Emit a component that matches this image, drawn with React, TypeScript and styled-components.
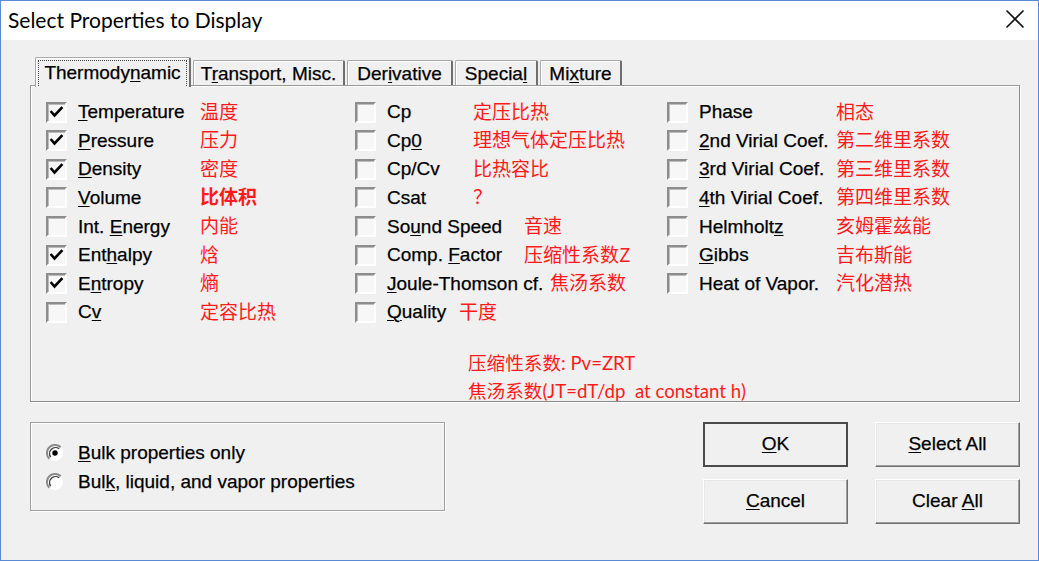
import React from "react";
import styled, {createGlobalStyle} from "styled-components";

const GlobalStyle = createGlobalStyle`
  html, body {
    margin: 0;
    padding: 0;
    background: #ffffff;
  }
  * {
    box-sizing: border-box;
  }
`;

const Window = styled.div`
  width: 1039px;
  height: 561px;
  border: 1px solid #5a8ad4;
  display: flex;
  flex-direction: column;
  background: #f0f0f0;
  font-family: "Liberation Sans", Arial, sans-serif;
  font-size: 19px;
  color: #000;
  -webkit-text-stroke: 0.25px #000;
`;

const TitleBar = styled.div`
  height: 39px;
  flex: none;
  background: #ffffff;
  display: flex;
  align-items: center;
  justify-content: space-between;
  padding: 0 8px 0 7px;
  -webkit-text-stroke: 0;
`;

const Title = styled.span`
  font-family: Lato, "Noto Sans", sans-serif;
  font-size: 21px;
  color: #000;
  padding-bottom: 3px;
`;

const CloseButton = styled.div`
  width: 30px;
  height: 30px;
  display: flex;
  align-items: center;
  justify-content: center;
  margin-bottom: 4px;
`;

const Body = styled.div`
  flex: 1;
  padding: 17px 18px 0 29px;
  display: flex;
  flex-direction: column;
`;

const TabStrip = styled.div`
  display: flex;
  align-items: flex-end;
  height: 30px;
  padding-left: 5px;
  margin-bottom: -2px;
  position: relative;
  z-index: 1;
`;

interface TabProps {
    width: number;
    selected?: boolean;
}

const Tab = styled.div<TabProps>`
  width: ${p => p.width}px;
  height: ${p => p.selected ? 30 : 25}px;
  margin-bottom: ${p => p.selected ? 0 : 2}px;
  margin-right: 2px;
  background: #f0f0f0;
  border-top: 1px solid #a8a8a8;
  border-left: 1px solid #a8a8a8;
  border-right: 2px solid #6e6e6e;
  box-shadow: inset 1px 1px 0 #ffffff;
  border-radius: 2px 2px 0 0;
  display: flex;
  justify-content: center;
  padding-top: ${p => p.selected ? 4 : 2}px;
  position: relative;
  line-height: 21px;
  white-space: nowrap;
`;

const FocusRing = styled.div`
  position: absolute;
  left: 2px;
  right: 2px;
  top: 2px;
  bottom: 1px;
  border: 1px dotted #444;
  border-bottom: none;
`;

const U = styled.span`
  text-decoration: underline;
  text-underline-offset: 2px;
  text-decoration-thickness: 1px;
`;

const Panel = styled.div`
  height: 317px;
  border: 1px solid #999999;
  border-right-color: #8a8a8a;
  border-bottom-color: #8a8a8a;
  box-shadow: inset 1px 1px 0 #ffffff, 1px 1px 0 #ffffff;
  padding: 12px 0 0 15px;
  display: flex;
  flex-direction: column;
`;

const Columns = styled.div`
  display: flex;
`;

const Column = styled.div<{ width?: number }>`
  display: flex;
  flex-direction: column;
  width: ${p => p.width ? `${p.width}px` : "auto"};
`;

const Row = styled.div`
  height: 28.57px;
  display: flex;
  align-items: center;
`;

const Box = styled.div`
  width: 21px;
  height: 21px;
  flex: none;
  border: 2px solid;
  border-color: #8c8c8c #ffffff #ffffff #8c8c8c;
  box-shadow: inset 1px 1px 0 #bcbcbc;
  background: #f7f7f7;
  margin-right: 11px;
  display: flex;
  align-items: center;
  justify-content: center;
`;

const Label = styled.span<{ width: number }>`
  width: ${p => p.width}px;
  flex: none;
  white-space: nowrap;
  line-height: 22px;
`;

const Note = styled.span<{ bold?: boolean }>`
  font-family: "Noto Sans CJK SC", sans-serif;
  font-size: 19px;
  font-weight: ${p => p.bold ? 700 : 400};
  color: #ff1a1a;
  -webkit-text-stroke: 0;
  white-space: nowrap;
  line-height: 22px;
  margin-top: -3px;
`;

const Notes = styled.div`
  margin: 22px 0 0 422px;
  font-family: Lato, "Noto Sans CJK SC", sans-serif;
  font-size: 18.6px;
  color: #ff1a1a;
  -webkit-text-stroke: 0;
  line-height: 28px;
`;

const Lower = styled.div`
  display: flex;
  justify-content: space-between;
  margin-top: 20px;
`;

const GroupBox = styled.div`
  width: 415px;
  height: 89px;
  border: 1px solid #a0a0a0;
  box-shadow: inset 1px 1px 0 #ffffff, 1px 1px 0 #ffffff;
  padding: 15px 0 0 15px;
`;

const RadioRow = styled.div`
  height: 29px;
  display: flex;
  align-items: center;
`;

const RadioMark = styled.svg`
  width: 18px;
  height: 18px;
  flex: none;
  margin-right: 14px;
`;

const ButtonGrid = styled.div`
  display: grid;
  grid-template-columns: 145px 145px;
  grid-auto-rows: 45px;
  column-gap: 27px;
  row-gap: 12px;
`;

const Button = styled.div<{ primary?: boolean }>`
  border: 1px solid;
  border-color: #ffffff #6e6e6e #6e6e6e #ffffff;
  box-shadow: inset -1px -1px 0 #a0a0a0, inset 1px 1px 0 #e6e6e6;
  ${p => p.primary && `
    outline: 2px solid #4a4a4a;
    outline-offset: -2px;
  `};
  display: flex;
  align-items: center;
  justify-content: center;
  padding-bottom: 2px;
  white-space: nowrap;
`;

interface Item {
    label: string;
    key?: number;
    checked?: boolean;
    note: string;
    bold?: boolean;
    width: number;
}

const col1: Item[] = [
    {label: "Temperature", key: 0, checked: true, note: "温度", width: 122},
    {label: "Pressure", key: 0, checked: true, note: "压力", width: 122},
    {label: "Density", key: 0, checked: true, note: "密度", width: 122},
    {label: "Volume", key: 0, note: "比体积", bold: true, width: 122},
    {label: "Int. Energy", key: 5, note: "内能", width: 122},
    {label: "Enthalpy", key: 3, checked: true, note: "焓", width: 122},
    {label: "Entropy", key: 1, checked: true, note: "熵", width: 122},
    {label: "Cv", key: 1, note: "定容比热", width: 122},
];

const col2: Item[] = [
    {label: "Cp", note: "定压比热", width: 86},
    {label: "Cp0", key: 2, note: "理想气体定压比热", width: 86},
    {label: "Cp/Cv", note: "比热容比", width: 86},
    {label: "Csat", note: "？", width: 86},
    {label: "Sound Speed", key: 2, note: "音速", width: 137},
    {label: "Comp. Factor", key: 6, note: "压缩性系数Z", width: 137},
    {label: "Joule-Thomson cf.", key: 0, note: "焦汤系数", width: 163},
    {label: "Quality", key: 0, note: "干度", width: 72},
];

const col3: Item[] = [
    {label: "Phase", note: "相态", width: 137},
    {label: "2nd Virial Coef.", key: 0, note: "第二维里系数", width: 137},
    {label: "3rd Virial Coef.", key: 0, note: "第三维里系数", width: 137},
    {label: "4th Virial Coef.", key: 0, note: "第四维里系数", width: 137},
    {label: "Helmholtz", key: 8, note: "亥姆霍兹能", width: 137},
    {label: "Gibbs", key: 0, note: "吉布斯能", width: 137},
    {label: "Heat of Vapor.", note: "汽化潜热", width: 137},
];

const tabs = [
    {label: "Thermodynamic", key: 8, width: 156},
    {label: "Transport, Misc.", key: 1, width: 152},
    {label: "Derivative", key: 3, width: 106},
    {label: "Special", key: 6, width: 83},
    {label: "Mixture", key: 2, width: 82},
];

const Mnemonic = ({text, at}: { text: string, at?: number }) => {
    if (at === undefined) return <span>{text}</span>;
    return <span>{text.slice(0, at)}<U>{text[at]}</U>{text.slice(at + 1)}</span>;
};

const Check = () => (
    <svg width="15" height="15" viewBox="0 0 15 15">
        <path d="M2.5 7 L5.5 10.5 L12.5 3" fill="none" stroke="#000" strokeWidth="2.6" strokeLinecap="square"/>
    </svg>
);

// classic sunken radio: dark arcs on the upper left, white face
const Radio = ({on}: { on?: boolean }) => (
    <RadioMark width="18" height="18" viewBox="0 0 18 18">
        <circle cx="9" cy="9" r="8" fill="#ffffff"/>
        <path d="M3.3 14.7 A8 8 0 0 1 14.7 3.3" fill="none" stroke="#8a8a8a" strokeWidth="2"/>
        <path d="M4.8 13.2 A6 6 0 0 1 13.2 4.8" fill="none" stroke="#404040" strokeWidth="1.4"/>
        {on && <circle cx="9" cy="9" r="2.7" fill="#000"/>}
    </RadioMark>
);

const PropertyColumn = ({items, width}: { items: Item[], width?: number }) => (
    <Column width={width}>
        {items.map(item =>
            <Row key={item.label}>
                <Box>{item.checked && <Check/>}</Box>
                <Label width={item.width}><Mnemonic text={item.label} at={item.key}/></Label>
                <Note bold={item.bold}>{item.note}</Note>
            </Row>)}
    </Column>
);

export default function App() {
    return (
        <>
            <GlobalStyle/>
            <Window>
                <TitleBar>
                    <Title>Select Properties to Display</Title>
                    <CloseButton>
                        <svg width="20" height="20" viewBox="0 0 20 20">
                            <path d="M1.5 1.5 L18.5 18.5 M18.5 1.5 L1.5 18.5" stroke="#111" strokeWidth="1.6"/>
                        </svg>
                    </CloseButton>
                </TitleBar>
                <Body>
                    <TabStrip>
                        {tabs.map((tab, index) =>
                            <Tab key={tab.label} width={tab.width} selected={index === 0}>
                                {index === 0 && <FocusRing/>}
                                <Mnemonic text={tab.label} at={tab.key}/>
                            </Tab>)}
                    </TabStrip>
                    <Panel>
                        <Columns>
                            <PropertyColumn items={col1} width={309}/>
                            <PropertyColumn items={col2} width={312}/>
                            <PropertyColumn items={col3}/>
                        </Columns>
                        <Notes>
                            <div>压缩性系数: Pv=ZRT</div>
                            <div>焦汤系数(JT=dT/dp&nbsp; at constant h)</div>
                        </Notes>
                    </Panel>
                    <Lower>
                        <GroupBox>
                            <RadioRow><Radio on/><span><U>B</U>ulk properties only</span></RadioRow>
                            <RadioRow><Radio/><span>Bul<U>k</U>, liquid, and vapor properties</span></RadioRow>
                        </GroupBox>
                        <ButtonGrid>
                            <Button primary><span><U>O</U>K</span></Button>
                            <Button><span><U>S</U>elect All</span></Button>
                            <Button><span><U>C</U>ancel</span></Button>
                            <Button><span>Clear <U>A</U>ll</span></Button>
                        </ButtonGrid>
                    </Lower>
                </Body>
            </Window>
        </>
    );
}
